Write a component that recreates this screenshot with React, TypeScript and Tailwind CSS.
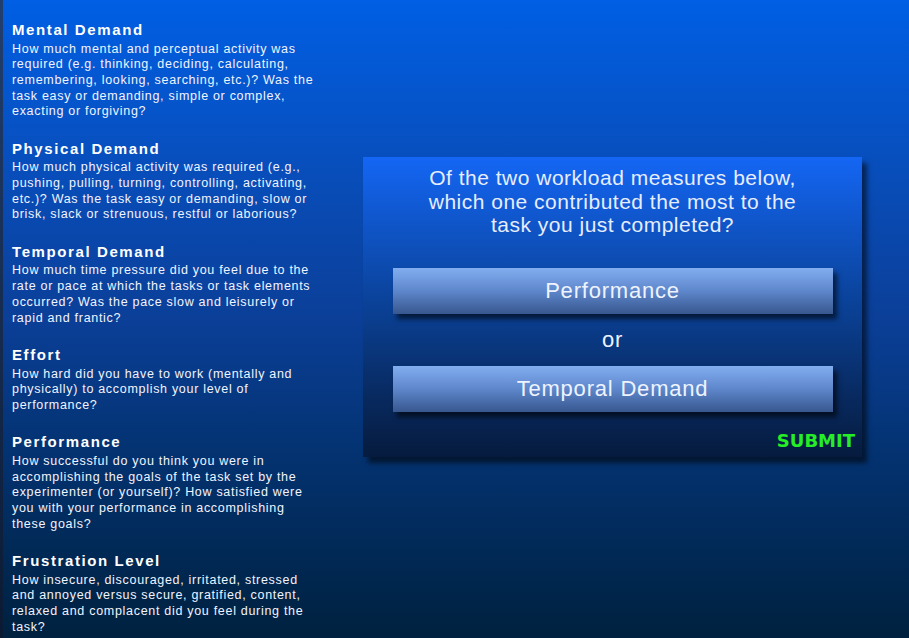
import React from "react";

const sections = [
  {
    title: "Mental Demand",
    lines: [
      "How much mental and perceptual activity was",
      "required (e.g. thinking, deciding, calculating,",
      "remembering, looking, searching, etc.)? Was the",
      "task easy or demanding, simple or complex,",
      "exacting or forgiving?",
    ],
  },
  {
    title: "Physical Demand",
    lines: [
      "How much physical activity was required (e.g.,",
      "pushing, pulling, turning, controlling, activating,",
      "etc.)? Was the task easy or demanding, slow or",
      "brisk, slack or strenuous, restful or laborious?",
    ],
  },
  {
    title: "Temporal Demand",
    lines: [
      "How much time pressure did you feel due to the",
      "rate or pace at which the tasks or task elements",
      "occurred? Was the pace slow and leisurely or",
      "rapid and frantic?",
    ],
  },
  {
    title: "Effort",
    lines: [
      "How hard did you have to work (mentally and",
      "physically) to accomplish your level of",
      "performance?",
    ],
  },
  {
    title: "Performance",
    lines: [
      "How successful do you think you were in",
      "accomplishing the goals of the task set by the",
      "experimenter (or yourself)? How satisfied were",
      "you with your performance in accomplishing",
      "these goals?",
    ],
  },
  {
    title: "Frustration Level",
    lines: [
      "How insecure, discouraged, irritated, stressed",
      "and annoyed versus secure, gratified, content,",
      "relaxed and complacent did you feel during the",
      "task?",
    ],
  },
];

function Choice({ label }: { label: string }) {
  return (
    <button className="w-[440px] h-[46px] flex items-center justify-center bg-gradient-to-b from-[#82aef0] via-[#5e87cb] to-[#38578f] shadow-[4px_5px_5px_rgba(0,0,0,0.6)] text-[22px] tracking-[0.8px] text-[#eef3ff] [font-family:'Liberation_Sans',Arial,sans-serif]">
      {label}
    </button>
  );
}

export default function App() {
  return (
    <div className="w-[909px] h-[638px] flex bg-gradient-to-b from-[#005fe4] via-[#0b3f98] to-[#00213f] overflow-hidden [font-family:'Liberation_Sans',Arial,sans-serif]">
      <div className="w-[3px] h-full bg-gradient-to-b from-[#213f70] to-[#0b1a33]" />
      <div className="w-[360px] pl-[9px] pt-[20px] flex flex-col gap-[18.8px] text-white">
        {sections.map((s) => (
          <div key={s.title} className="flex flex-col">
            <div className="text-[15px] leading-[20px] font-bold tracking-[1.6px]">{s.title}</div>
            <div className="mt-[1.5px] text-[12.5px] leading-[15.7px] tracking-[0.7px] text-[#f2f4ff]">
              {s.lines.map((l, i) => (
                <div key={i}>{l}</div>
              ))}
            </div>
          </div>
        ))}
      </div>
      <div className="mt-[157px] w-[499px] h-[300px] flex flex-col items-center bg-gradient-to-b from-[#1466f4] via-[#0a4196] to-[#061b3e] shadow-[5px_6px_5px_rgba(0,0,0,0.55)]">
        <div className="mt-[9px] text-center text-[21px] leading-[23.5px] tracking-[0.5px] text-[#e6edff]">
          <div>Of the two workload measures below,</div>
          <div>which one contributed the most to the</div>
          <div>task you just completed?</div>
        </div>
        <div className="mt-[31px]">
          <Choice label="Performance" />
        </div>
        <div className="h-[52px] flex items-center text-[22px] text-[#eef3ff] tracking-[0.8px]">or</div>
        <Choice label="Temporal Demand" />
        <div className="w-full flex justify-end pr-[7px] mt-[20px]">
          <span className="text-[18px] leading-[18px] font-bold tracking-[0px] text-[#26ee26] [font-family:'DejaVu_Sans',sans-serif]">SUBMIT</span>
        </div>
      </div>
    </div>
  );
}
